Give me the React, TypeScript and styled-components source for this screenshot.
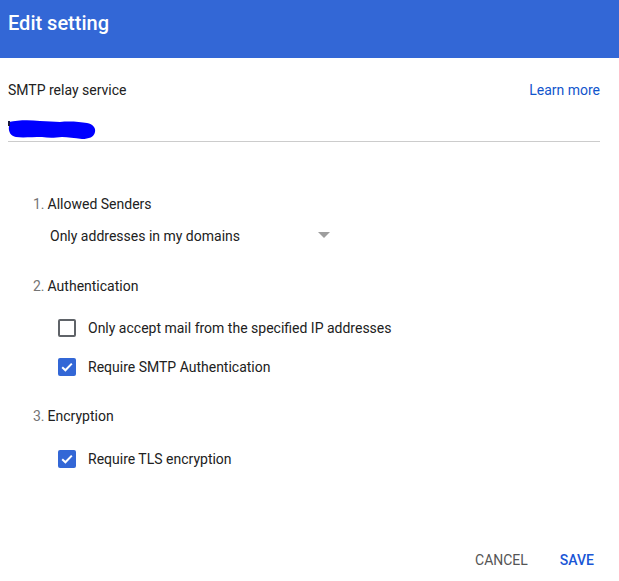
import React from "react";
import styled, { createGlobalStyle } from "styled-components";

const GlobalStyle = createGlobalStyle`
  html, body {
    margin: 0;
    padding: 0;
    background: #fff;
  }
  body {
    font-family: Roboto, "Liberation Sans", Arial, sans-serif;
    color: #212121;
    -webkit-font-smoothing: antialiased;
  }
`;

const Dialog = styled.div`
  width: 619px;
  height: 581px;
  display: flex;
  flex-direction: column;
  background: #fff;
  overflow: hidden;
`;

const Header = styled.header`
  height: 58px;
  box-sizing: border-box;
  padding: 11px 8px 0;
  background: #3367d6;
  color: #fff;
  font-size: 20px;
  font-weight: 500;
  line-height: 24px;
`;

const Content = styled.div`
  padding: 0 19px 0 8px;
  display: flex;
  flex-direction: column;
  flex: 1;
  font-size: 14px;
  line-height: 16px;
`;

const ServiceRow = styled.div`
  margin-top: 24px;
  display: flex;
  justify-content: space-between;
`;

const Link = styled.a`
  color: #1155cc;
  text-decoration: none;
  cursor: pointer;
`;

const Field = styled.div`
  padding: 22px 0 2px;
  border-bottom: 1px solid #cccccc;
  line-height: 0;
`;

const Sections = styled.div`
  padding-left: 25px;
  display: flex;
  flex-direction: column;
`;

const Title = styled.div<{ $gap: number }>`
  margin-top: ${(p) => p.$gap}px;
  color: #212121;
`;

const Num = styled.span`
  color: #757575;
  margin-right: 3px;
`;

const Select = styled.div`
  margin-top: 16px;
  margin-left: 17px;
  width: 280px;
  display: flex;
  align-items: center;
  justify-content: space-between;
  cursor: pointer;
`;

const Caret = styled.span`
  width: 0;
  height: 0;
  margin-top: -3px;
  border-left: 6px solid transparent;
  border-right: 6px solid transparent;
  border-top: 6px solid #9e9e9e;
`;

const CheckRow = styled.label<{ $gap: number }>`
  margin-top: ${(p) => p.$gap}px;
  margin-left: 25px;
  display: flex;
  align-items: center;
  gap: 12px;
  height: 18px;
  color: #212121;
  cursor: pointer;
`;

const Box = styled.span<{ $checked: boolean }>`
  width: 18px;
  height: 18px;
  box-sizing: border-box;
  border-radius: 2px;
  display: flex;
  align-items: center;
  justify-content: center;
  background: ${(p) => (p.$checked ? "#3367d6" : "#fff")};
  border: ${(p) => (p.$checked ? "none" : "2px solid #5f6368")};
`;

const Footer = styled.div`
  margin-top: auto;
  padding: 0 6px 13px 0;
  display: flex;
  justify-content: flex-end;
  gap: 32px;
`;

const Button = styled.button<{ $primary?: boolean }>`
  background: none;
  border: none;
  padding: 0;
  font-family: inherit;
  font-size: 14px;
  line-height: 16px;
  font-weight: ${(p) => (p.$primary ? 500 : 400)};
  color: ${(p) => (p.$primary ? "#1a56d6" : "#555")};
  text-transform: uppercase;
  cursor: pointer;
`;

// scribbled-out field value
const Redacted = () => (
  <svg width="88" height="19" viewBox="0 0 88 19" style={{ display: "block" }}>
    <path
      d="M1 2 C10 0 22 0 32 1 C40 1 46 2 52 2 C62 1 72 2 79 3 C85 4 88 8 87 12 C86 17 81 19 74 19 C66 18 60 17 54 17 C46 18 40 18 34 17 C24 17 14 18 8 17 C3 16 0 12 1 6 Z"
      fill="#0000ff"
    />
    <path d="M0 1 L2 1 L2 6 L0 6 Z" fill="#1a1a40" />
  </svg>
);

const Check = () => (
  <svg width="14" height="14" viewBox="0 0 14 14">
    <path d="M2.2 7.2 L5.4 10.3 L11.8 3.6" fill="none" stroke="#fff" strokeWidth="2" />
  </svg>
);

const Checkbox: React.FC<{ checked: boolean; label: string; gap: number }> = ({ checked, label, gap }) => (
  <CheckRow $gap={gap}>
    <Box $checked={checked}>{checked && <Check />}</Box>
    {label}
  </CheckRow>
);

export default function App() {
  return (
    <>
      <GlobalStyle />
      <Dialog>
        <Header>Edit setting</Header>
        <Content>
          <ServiceRow>
            <span>SMTP relay service</span>
            <Link>Learn more</Link>
          </ServiceRow>
          <Field>
            <Redacted />
          </Field>
          <Sections>
            <Title $gap={54}>
              <Num>1.</Num>Allowed Senders
            </Title>
            <Select>
              <span>Only addresses in my domains</span>
              <Caret />
            </Select>
            <Title $gap={34}>
              <Num>2.</Num>Authentication
            </Title>
            <Checkbox gap={25} checked={false} label="Only accept mail from the specified IP addresses" />
            <Checkbox gap={21} checked label="Require SMTP Authentication" />
            <Title $gap={32}>
              <Num>3.</Num>Encryption
            </Title>
            <Checkbox gap={26} checked label="Require TLS encryption" />
          </Sections>
          <Footer>
            <Button>Cancel</Button>
            <Button $primary>Save</Button>
          </Footer>
        </Content>
      </Dialog>
    </>
  );
}
